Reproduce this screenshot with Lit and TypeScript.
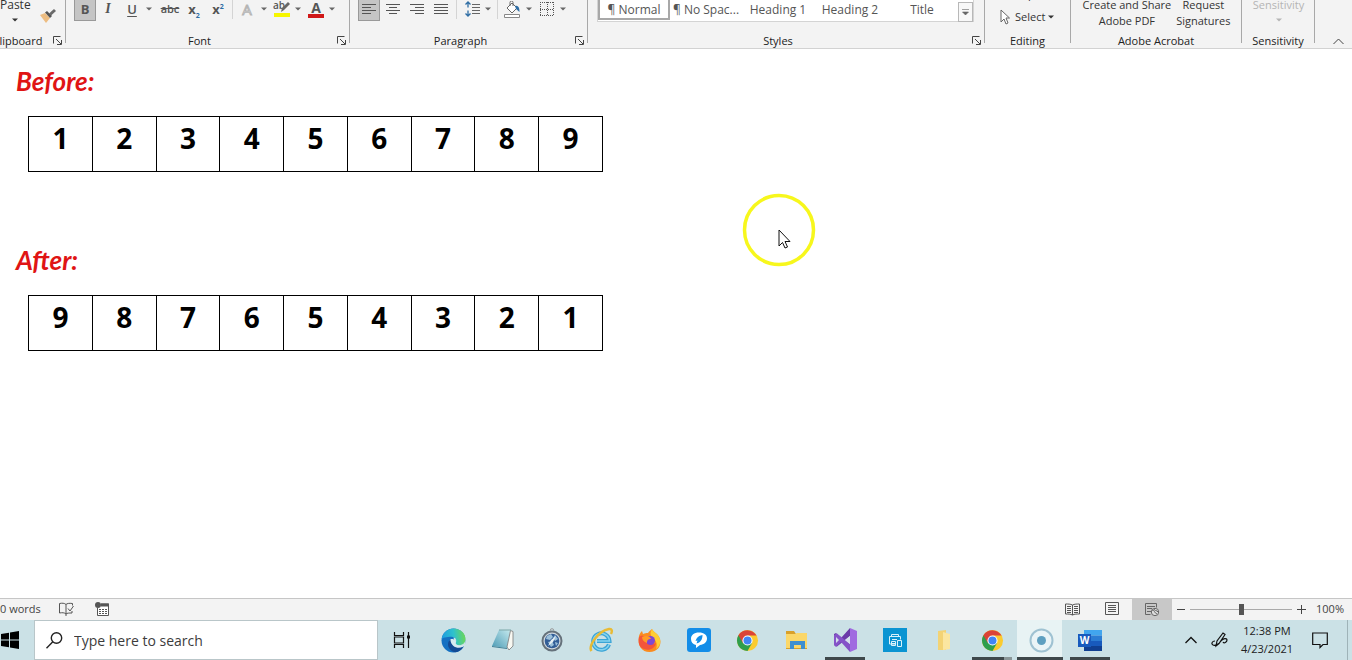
import { LitElement, html, css, svg, TemplateResult } from "lit";
import { customElement, property } from "lit/decorators.js";
import { classMap } from "lit/directives/class-map.js";

const reset = css`
  * { box-sizing: border-box; }
  button, input { font: inherit; color: inherit; margin: 0; padding: 0; border: 0; background: none; border-radius: 0; }
  button { display: flex; align-items: center; justify-content: center; white-space: nowrap; }
  svg { display: block; flex: none; }
`;

const caret = html`<svg width="6" height="4" viewBox="0 0 6 4"><path d="M0 .5h6L3 3.5z" fill="currentColor"/></svg>`;

const lines = (rows: number[][]) => html`<svg width="14" height="12" viewBox="0 0 14 12" stroke="#555" fill="none">
  ${rows.map(([a, b], i) => svg`<path d="M${a} ${i * 3 + 1.5}H${b}"/>`)}</svg>`;

@customElement("ribbon-group")
class RibbonGroup extends LitElement {
  @property() label = "";
  @property({ type: Boolean }) launcher = false;

  static styles = [reset, css`
    :host { display: flex; flex-direction: column; position: relative; height: 48px; overflow: hidden; }
    :host::after { content: ""; position: absolute; right: 0; top: 0; height: 43px; width: 1px; background: #a8a8a8; }
    .tools { flex: 1; min-height: 0; }
    .foot { display: flex; align-items: center; height: 16px; padding-right: 1px; color: #222; }
    .label { flex: 1; padding-top: 1px; white-space: nowrap; display: flex; justify-content: center; }
    .launch { width: 16px; height: 16px; }
  `];

  render() {
    return html`
      <div class="tools"><slot></slot></div>
      <div class="foot">
        <span class="label">${this.label}</span>
        ${this.launcher ? html`<button class="launch" aria-label="${this.label} settings">
          <svg width="9" height="9" viewBox="0 0 9 9" fill="none" stroke="#444"><path d="M.5 7.500V.5H7.500M3 3l5 5M8.500 4v4.500H4"/></svg>
        </button>` : null}
      </div>`;
  }
}

@customElement("word-ribbon")
class WordRibbon extends LitElement {
  static styles = [reset, css`
    :host { display: flex; background: #f3f3f3; border-bottom: 1px solid #d2d2d2; color: #333; font-size: 11px; overflow: hidden; }
    .clipboard { width: 80px; margin-left: -14px; }
    .font { width: 284px; }
    .paragraph { width: 238px; }
    .styles { flex: 1; min-width: 397px; }
    .editing { width: 86px; }
    .acrobat { width: 171px; }
    .sensitivity { width: 73px; }
    .end { width: 37px; display: flex; align-items: flex-end; justify-content: flex-end; padding: 0 8px 3px 0; }
    .row { display: flex; height: 20px; padding-left: 8px; align-items: center; color: #555; }
    .tool { width: 22px; height: 22px; margin-top: -2px; }
    .wide { width: 24px; }
    .on { background: #c5c5c5; border: 1px solid #999; height: 24px; }
    .caret { width: 10px; height: 20px; margin-top: -2px; color: #666; }
    .gap { margin-right: 4px; }
    .near { margin-right: 2px; }
    .aligns { display: flex; gap: 2px; align-items: center; }
    .sep { width: 1px; height: 20px; margin: -2px 4px 0 4px; background: #d4d4d4; }
    .tight { margin: -2px 2px 0 2px; }
    .b { font-weight: 700; font-size: 13px; }
    .i { font: italic 700 14px "Liberation Serif", serif; }
    .u { font-weight: 600; font-size: 13px; text-decoration: underline; text-underline-offset: 2px; }
    .s { font-size: 11px; font-weight: 600; text-decoration: line-through; }
    .x { font-weight: 700; font-size: 13px; }
    .x sub, .x sup { font-size: 7px; line-height: 0; color: #2e6da4; }
    .ghost { font-size: 15px; line-height: 18px; color: #f3f3f3; -webkit-text-stroke: 1px #b5b5b5; }
    .red { font-size: 14px; font-weight: 700; line-height: 14px; border-bottom: 4px solid #d01818; width: 16px; height: 17px; text-align: center; }
    .clip { display: flex; align-items: flex-start; justify-content: space-between; padding: 0 10px 0 14px; font-size: 12px; }
    .paste { display: flex; flex-direction: column; align-items: center; gap: 5px; margin-top: -3px; line-height: 16px; }
    .brush { margin-top: 8px; }
    .gallery { display: flex; height: 22px; margin: 0 11px 0 9px; background: #fff; border: 1px solid #d4d4d4; border-top: 0; color: #555; font-size: 12px; }
    .style { flex: 1; min-width: 0; height: 20px; padding-bottom: 1px; }
    .chosen { box-shadow: inset 2px 0 #a8a8a8, inset -2px 0 #a8a8a8, inset 0 -2px #a8a8a8; }
    .more { width: 15px; height: 20px; margin-top: 2px; border: 1px solid #b8b8b8; background: #f8f8f8; }
    .edits { display: flex; flex-direction: column; align-items: flex-start; gap: 4px; padding-left: 14px; margin-top: -16px; }
    .edit { gap: 5px; height: 20px; padding-left: 1px; color: #333; }
    .select { display: flex; align-items: center; gap: 3px; }
    .replace { padding-left: 16px; height: 19px; }
    .acro { display: flex; justify-content: center; gap: 5px; margin-top: -3px; }
    .two { line-height: 16px; text-align: center; display: block; }
    .sens { display: flex; flex-direction: column; gap: 5px; width: 100%; margin-top: -3px; line-height: 16px; color: #b5b5b5; }
  `];

  private drop(name: string, extra = "") {
    return html`<button class="caret ${extra}" aria-label="${name} options">${caret}</button>`;
  }

  render() {
    const aligns: [string, number[][]][] = [
      ["Align left", [[0, 14], [0, 9], [0, 14], [0, 9]]],
      ["Center", [[0, 14], [3, 11], [0, 14], [3, 11]]],
      ["Align right", [[0, 14], [5, 14], [0, 14], [5, 14]]],
      ["Justify", [[0, 14], [0, 14], [0, 14], [0, 14]]],
    ];
    const styles = ["¶ Normal", "¶ No Spac...", "Heading 1", "Heading 2", "Title"];
    return html`
      <ribbon-group class="clipboard" label="Clipboard" launcher>
        <div class="clip">
          <button class="paste"><span>Paste</span>${caret}</button>
          <button class="brush" aria-label="Format painter">
            <svg width="16" height="15" viewBox="0 0 16 15"><path d="M0 7l5-2 5 5-4 5z" fill="#edbd82"/><path d="M5 4.500l2-1.500 5 5-2 2z" fill="#555"/><path d="M9 5.500L14 1l2 2-5 4.500z" fill="#6a6a6a"/></svg>
          </button>
        </div>
      </ribbon-group>
      <ribbon-group class="font" label="Font" launcher>
        <div class="row">
          <button class="tool on b">B</button>
          <button class="tool wide i">I</button>
          <button class="tool wide u">U</button>
          ${this.drop("Underline", "gap")}
          <button class="tool wide s">abc</button>
          <button class="tool wide x"><span>x<sub>2</sub></span></button>
          <button class="tool wide x"><span>x<sup>2</sup></span></button>
          <span class="sep tight"></span>
          <button class="tool wide ghost">A</button>
          ${this.drop("Text effects", "near")}
          <button class="tool" aria-label="Highlight color">
            <svg width="18" height="18" viewBox="0 0 18 18"><text x="0" y="9" font-size="10" font-weight="600" fill="#555">ab</text><path d="M1 13h16v4H1z" fill="#f6f600"/><path d="M8 12l1-4 6-6 2 2-6 6z" fill="#666"/></svg>
          </button>
          ${this.drop("Highlight", "near")}
          <button class="tool"><span class="red">A</span></button>
          ${this.drop("Font color")}
        </div>
      </ribbon-group>
      <ribbon-group class="paragraph" label="Paragraph" launcher>
        <div class="row">
          <div class="aligns">
            ${aligns.map(([name, rows], i) => html`<button class=${classMap({ tool: true, on: i === 0 })} aria-label=${name}>${lines(rows)}</button>`)}
          </div>
          <span class="sep"></span>
          <button class="tool" aria-label="Line spacing">
            <svg width="15" height="16" viewBox="0 0 15 16" fill="none"><path d="M3 1v5.500M3 9.500V15M.5 3.500L3 1l2.500 2.500M.5 12.500L3 15l2.500-2.500" stroke="#2e6da4" stroke-width="1.300"/><path d="M7 3.500h8M7 6.500h8M7 9.500h8M7 12.500h8" stroke="#666"/></svg>
          </button>
          ${this.drop("Line spacing", "near")}
          <span class="sep tight"></span>
          <button class="tool wide" aria-label="Shading">
            <svg width="17" height="17" viewBox="0 0 17 17" fill="none"><path d="M3 7l5-5 5 5-5 5zM6 5V1.500a1.500 1.500 0 0 1 3 0V5" stroke="#666" fill="#fff"/><path d="M11 5c3-1 4.500 1 4.500 6L12 8z" fill="#2e6da4"/><path d="M.5 13.500h15v3H.5z" stroke="#888" fill="#fff"/></svg>
          </button>
          ${this.drop("Shading", "near")}
          <button class="tool" aria-label="Borders">
            <svg width="14" height="14" viewBox="0 0 14 14" fill="none" stroke="#555" stroke-dasharray="1 1"><path d="M.5 0v14M13.500 0v14M0 .5h14M7.500 0v14M0 7.500h14"/><path d="M0 13.500h14"/></svg>
          </button>
          ${this.drop("Borders")}
        </div>
      </ribbon-group>
      <ribbon-group class="styles" label="Styles" launcher>
        <div class="gallery">
          ${styles.map((s, i) => html`<button class=${classMap({ style: true, chosen: i === 0 })}>${s}</button>`)}
          <button class="more" aria-label="More styles"><svg width="7" height="7" viewBox="0 0 7 7"><path d="M0 .5h7M.5 3h6l-3 3z" fill="#666" stroke="#666" stroke-width=".6"/></svg></button>
        </div>
      </ribbon-group>
      <ribbon-group class="editing" label="Editing">
        <div class="edits">
          <button class="edit replace">Replace</button>
          <button class="edit"><svg width="10" height="16" viewBox="0 0 10 16"><path d="M1 1v12l3-3 2 5 2-1-2-5h3.500z" fill="#fff" stroke="#666"/></svg><span class="select">Select ${caret}</span></button>
        </div>
      </ribbon-group>
      <ribbon-group class="acrobat" label="Adobe Acrobat">
        <div class="acro">
          <button class="two">Create and Share<br>Adobe PDF</button>
          <button class="two">Request<br>Signatures</button>
        </div>
      </ribbon-group>
      <ribbon-group class="sensitivity" label="Sensitivity">
        <button class="sens" disabled><span>Sensitivity</span>${caret}</button>
      </ribbon-group>
      <div class="end"><button aria-label="Collapse ribbon"><svg width="11" height="7" viewBox="0 0 11 7" fill="none" stroke="#444"><path d="M.5 6l5-5 5 5"/></svg></button></div>`;
  }
}

@customElement("word-document")
class WordDocument extends LitElement {
  static styles = [reset, css`
    :host { display: block; background: #fff; padding: 17px 16px; overflow: hidden; }
    .block { margin-bottom: 73px; }
    h2 { margin: 0 0 20px; font-family: Lato, sans-serif; font-size: 26px; line-height: 30px; font-weight: 700; font-style: italic; color: #e01414; }
    table { border-collapse: collapse; table-layout: fixed; width: 575px; max-width: 100%; margin-left: 12px; }
    td { border: 1px solid #000; height: 55px; padding: 3px 0 0; vertical-align: top; text-align: center; font-size: 28px; line-height: 36px; font-weight: 700; color: #000; }
  `];

  render() {
    const digits = [1, 2, 3, 4, 5, 6, 7, 8, 9];
    const block = (title: string, values: number[]) => html`<section class="block">
      <h2>${title}</h2>
      <table aria-label=${title}><tbody><tr>${values.map((v) => html`<td>${v}</td>`)}</tr></tbody></table>
    </section>`;
    return html`${block("Before:", digits)}${block("After:", [...digits].reverse())}`;
  }
}

@customElement("word-status")
class WordStatus extends LitElement {
  static styles = [reset, css`
    :host { display: flex; align-items: flex-start; height: 22px; background: #f3f3f3; border-top: 1px solid #c6c6c6; color: #444; padding-right: 8px; font-size: 11px; line-height: 20px; }
    .words { margin-right: 18px; }
    .icon { width: 16px; height: 20px; margin-right: 19px; }
    .space { flex: 1; }
    .view { width: 40px; height: 20px; }
    .active { background: #c8c8c8; height: 21px; }
    .step { width: 18px; height: 20px; }
    .zoom { -webkit-appearance: none; appearance: none; width: 102px; height: 20px; background: linear-gradient(#aaa, #aaa) center / 100% 1px no-repeat; }
    .zoom::-webkit-slider-thumb { -webkit-appearance: none; width: 5px; height: 11px; background: #555; }
    .pct { margin-left: 6px; width: 28px; justify-content: flex-end; }
  `];

  render() {
    return html`
      <span class="words">0 words</span>
      <button class="icon" aria-label="Proofing"><svg width="15" height="14" viewBox="0 0 15 14" fill="none" stroke="#555"><path d="M7 2.500C5.500 1 3 1 .5 1.500v9.500c2.500-.5 5-.5 6.500 1V2.500C8 1.500 10 1 13.500 1.500v2M7 12c1-1 3-1 6-1V9M9 6.500l2 2.500 3.500-5M7 12v2"/></svg></button>
      <button class="icon" aria-label="Macros"><svg width="14" height="14" viewBox="0 0 14 14"><path d="M2.500 6v7.500h11V2H6" fill="#fff" stroke="#555"/><path d="M6 1.500h8V4.500H6z" fill="#555"/><circle cx="3" cy="3" r="3" fill="#555"/><path d="M4 7.500h8M4 9.500h8M4 11.500h8" stroke="#555" stroke-dasharray="2 1"/></svg></button>
      <span class="space"></span>
      <button class="view" aria-label="Read mode"><svg width="15" height="13" viewBox="0 0 15 13" fill="none" stroke="#555"><path d="M7.500 2C5.500 1 3 1 .5 1v10c2.500 0 5 0 7 1 2-1 4.500-1 7-1V1c-2.500 0-5 0-7 1zM7.500 2v10M2 3.500h4M2 5.500h4M2 7.500h4M2 9.500h4M9 3.500h4M9 5.500h4M9 7.500h4M9 9.500h4"/></svg></button>
      <button class="view" aria-label="Print layout"><svg width="14" height="14" viewBox="0 0 14 14" fill="none" stroke="#555"><path d="M.5.500h13v12H.5zM3 3.500h8M3 5.500h8M3 7.500h8M3 9.500h8"/></svg></button>
      <button class="view active" aria-label="Web layout"><svg width="15" height="14" viewBox="0 0 15 14" fill="none" stroke="#666"><path d="M5.500 11.500h-5V.5h11v4M2 3.500h8M2 5.500h5M2 8.500h4"/><circle cx="10" cy="9" r="3.700" fill="#ddd"/><path d="M7 7c3 0 2 3 5 4M9 6c0 2 3 1 4 3"/></svg></button>
      <button class="step" aria-label="Zoom out"><svg width="8" height="9" viewBox="0 0 8 9" stroke="#444"><path d="M0 4.500h8"/></svg></button>
      <input class="zoom" type="range" min="0" max="100" .value=${"50"} aria-label="Zoom">
      <button class="step" aria-label="Zoom in"><svg width="9" height="9" viewBox="0 0 9 9" stroke="#444"><path d="M0 4.500h9M4.500 0v9"/></svg></button>
      <button class="pct">100%</button>`;
  }
}

const chrome = html`<svg width="23" height="23" viewBox="0 0 24 24">
  <circle cx="12" cy="12" r="11" fill="#fbcb2f"/>
  <path d="M12 12L2.500 6.500A11 11 0 0 0 12 23l4.800-8.500z" fill="#2f9e4d"/>
  <path d="M2.500 6.500A11 11 0 0 1 21.500 6.800H12L7.200 14.500z" fill="#db4437"/>
  <circle cx="12" cy="12" r="5.300" fill="#fff"/><circle cx="12" cy="12" r="4.200" fill="#4285f4"/></svg>`;

interface App { name: string; state?: string; icon: TemplateResult; }

const apps: App[] = [
  { name: "Edge", icon: html`<svg width="25" height="25" viewBox="0 0 24 24">
    <defs><linearGradient id="eg" x1="0" y1=".3" x2="1" y2=".2"><stop offset="0" stop-color="#1d9de0"/><stop offset=".5" stop-color="#2fc2cc"/><stop offset="1" stop-color="#6fd94e"/></linearGradient></defs>
    <circle cx="12" cy="12" r="11.500" fill="#1570c2"/>
    <path d="M12 9h11.500V17L14 19z" fill="#cbe1e6"/>
    <path d="M.6 11C1.500 4.500 6.500.5 12 .5c7 0 11.500 5 11.500 10 0 4-3 6-6.300 6-2.500 0-3.700-1-3.200-2 1.400-1.800.8-6-4-6C5.500 8.500 1 9.500.6 11z" fill="url(#eg)"/>
    <path d="M9.500 10.500c-3.500 3-1 9 4.500 9.500 3 .2 6.800-1.200 9-3.500-4 1-9.300.5-9-2.500.8-1-.7-4-4.500-3.500z" fill="#d8eaf0"/>
    <path d="M9 11c-4.500 3.500-2 11 4.500 12.300 3.500-.3 6.300-2.300 7.800-5.300-5 2.500-11.800.2-12.300-7z" fill="#144a94"/></svg>` },
  { name: "Notepad", icon: html`<svg width="24" height="24" viewBox="0 0 24 24"><defs><linearGradient id="np" x1="1" y1="0" x2="0" y2="1"><stop offset="0" stop-color="#c4e9ee"/><stop offset="1" stop-color="#4b9ab4"/></linearGradient></defs><path d="M8 2l11 .5L16 20 1 18z" fill="url(#np)"/><path d="M19.500 2.500l2.500 1V18l-4 4-2-3z" fill="#f8f8f2" stroke="#777" stroke-width=".8"/><path d="M1 18l15 2v1L1 19z" fill="#3f7f95"/><path d="M8 2h12" stroke="#78a6a8"/></svg>` },
  { name: "Safari", icon: html`<svg width="24" height="25" viewBox="0 0 24 25"><circle cx="12" cy="2.500" r="1.800" fill="none" stroke="#999"/><circle cx="12" cy="13" r="9.500" fill="#d0d8de" stroke="#65717b" stroke-width="2"/><circle cx="12" cy="13" r="7.300" fill="#315d96"/><path d="M7 8l4-2 2 3-3 3-4-1zM15 7l3 4-3 2-2-3zM8 14l4-1 2 4-3 2zM15 14l3 1-2 3z" fill="#9cc0da"/><path d="M16 8l-3 6-5 4 3-6z" fill="#e6f0f5"/></svg>` },
  { name: "Internet Explorer", icon: html`<svg width="26" height="26" viewBox="0 0 26 26" fill="none"><path d="M21 17.500A8.200 8.200 0 1 1 21.500 14H9" stroke="#3ba4d6" stroke-width="4"/><path d="M21 17.500A8.200 8.200 0 1 1 21.500 14H9" stroke="#86d3ef" stroke-width="1.500"/><path d="M3.500 24C0 19 10 4 21 2c3-.5 3.500 2 2 5" stroke="#e9bb35" stroke-width="2.500"/></svg>` },
  { name: "Firefox", icon: html`<svg width="25" height="25" viewBox="0 0 25 25"><path d="M2 8C3 5 4 4 5 3l1 3c2-1 3-1 5-1 1-2 3-3 4-4 1 3 6 4 8 10 2 7-3 13-10.500 13S0 18 2 8z" fill="#fa8b1f"/><path d="M15 1c1 3 6 4 8 10 1 5-1 8-4 10 2-5 0-9-4-12-2-2-2-5 0-8z" fill="#ffce34"/><path d="M2 9c2-2 4-2 6 0 4-1 6 0 7 3-2-1-3 0-4 2 2 2 5 3 8 1-1 6-7 8-12 6S1 15 2 9z" fill="#f4553a"/><circle cx="13.500" cy="12.500" r="4.500" fill="#8048d3"/><path d="M5 9c4-2 8-1 9 2-3 0-4 1-4 4-3-1-5-3-5-6z" fill="#ff9b25"/></svg>` },
  { name: "Messenger", icon: html`<svg width="24" height="24" viewBox="0 0 24 24"><rect width="24" height="24" rx="3" fill="#138de8"/><path d="M12 4.500c5 0 8 2.500 8 6s-3 6-7 6.500L9 20v-3c-3-.5-5-3-5-6 0-4 3-6.500 8-6.500z" fill="#fff"/><path d="M15.500 7c-4 .5-6 3-7 6l2-.5-1 3c4-1 6-4 6-8.500z" fill="#138de8"/></svg>` },
  { name: "Chrome", icon: chrome },
  { name: "File Explorer", icon: html`<svg width="24" height="22" viewBox="0 0 24 22"><path d="M1 2h8l2 3h11v15H1z" fill="#d9a02a"/><path d="M1 5h9l2-1h10v15H1z" fill="#fbd769"/><path d="M5 12h15v8h-4v-4H9v4H5z" fill="#3f8fd0"/></svg>` },
  { name: "Visual Studio", state: "open", icon: html`<svg width="25" height="24" viewBox="0 0 25 24"><path d="M17 0l7 3v18l-7 3z" fill="#a06be0"/><path d="M1 6l2-1 5 5 9-10v8L4 18.500 1 17z" fill="#6b3aa8"/><path d="M1 17l2 2 5-5 9 10v-8L4 5.500 1 7z" fill="#8553c8"/><path d="M3 9v6l3-3zM17 8v8l-5-4z" fill="#d5dfec"/></svg>` },
  { name: "Scanner", icon: html`<svg width="24" height="24" viewBox="0 0 24 24" fill="none" stroke="#d9f1fa"><path d="M0 0h24v24H0z" fill="#0a94d2" stroke="none"/><path d="M8.500 8V6.500h7V8M12 16H6.500V8.500h11v3M9 11.500h5M8.500 17.500h4v-4h-4zM14.500 12.500h4v6h-4zM8.500 15.500h4"/></svg>` },
  { name: "Folder", icon: html`<svg width="16" height="22" viewBox="0 0 16 22"><path d="M2 2l8-1v20H2z" fill="#f3d374"/><path d="M7 3l7 2v15l-7 1z" fill="#fbe6a0"/></svg>` },
  { name: "Chrome window", state: "open many", icon: chrome },
  { name: "Recorder", state: "open focus", icon: html`<svg width="25" height="25" viewBox="0 0 25 25"><circle cx="12.500" cy="12.500" r="11" fill="#eaf4f7" stroke="#9fc2d2" stroke-width="2"/><circle cx="12.500" cy="12.500" r="4.500" fill="#5e9fc0"/></svg>` },
  { name: "Word", state: "open", icon: html`<svg width="25" height="23" viewBox="0 0 25 23"><path d="M6 1h18v5.500H6z" fill="#41a5ee"/><path d="M6 6.500h18V12H6z" fill="#2b7cd3"/><path d="M6 12h18v5H6z" fill="#185abd"/><path d="M6 17h18v5H6z" fill="#103f91"/><path d="M0 5h13v13H0z" fill="#185abd"/><text x="6.500" y="15" font-size="10" font-weight="700" text-anchor="middle" fill="#fff">W</text></svg>` },
];

@customElement("task-bar")
class TaskBar extends LitElement {
  static styles = [reset, css`
    :host { display: flex; height: 40px; background: #cbe1e6; color: #222; padding-right: 4px; }
    .start { width: 34px; padding-right: 15px; }
    .search { display: flex; align-items: center; width: 344px; background: #fff; border: 1px solid #b9c6c9; padding-left: 11px; gap: 11px; }
    .field { flex: 1; min-width: 0; height: 36px; outline: 0; font-size: 14px; }
    .field::placeholder { color: #3c3c3c; opacity: 1; }
    .view { width: 51px; padding-right: 3px; }
    .apps { display: flex; }
    .app { position: relative; width: 49px; height: 40px; }
    .open::after { content: ""; position: absolute; left: 4px; right: 5px; bottom: 0; height: 3px; background: #3f484b; }
    .many::after { background: linear-gradient(90deg, #3f484b 32px, #8a9698 32px); }
    .focus { background: linear-gradient(90deg, #e8f3f4 45px, transparent 45px); }
    .focus::after { left: 0; right: 3px; }
    .space { flex: 1; }
    .tray { width: 28px; }
    .clock { width: 68px; display: block; font-size: 11px; line-height: 18px; text-align: center; }
    .note { width: 40px; margin-right: 6px; padding-right: 2px; }
    .edge { width: 1px; background: #9fb3b8; }
  `];

  render() {
    return html`
      <button class="start" aria-label="Start"><svg width="18" height="18" viewBox="0 0 18 18"><path d="M0 3l8-1.200V8.500H0zM9 1.600L18 0v8.500H9zM0 9.500h8v6.700L0 15zM9 9.500h9V18l-9-1.600z" fill="#000"/></svg></button>
      <label class="search">
        <svg width="17" height="17" viewBox="0 0 17 17" fill="none" stroke="#222" stroke-width="1.400"><circle cx="10.500" cy="6" r="5.200"/><path d="M6.800 9.800L.5 16.200"/></svg>
        <input class="field" type="text" placeholder="Type here to search" aria-label="Search">
      </label>
      <button class="view" aria-label="Task view"><svg width="18" height="16" viewBox="0 0 18 16" fill="none" stroke="#111" stroke-width="1.200"><path d="M1.500 0v3.500h9V0M1.500 16v-3.500h9V16M1.500 5v6h9V5zM15.500 0v16"/><path d="M14 3.500h3v3h-3z" fill="#111" stroke="none"/></svg></button>
      <div class="apps">${apps.map((a) => html`<button class="app ${a.state ?? ""}" aria-label=${a.name}>${a.icon}</button>`)}</div>
      <span class="space"></span>
      <button class="tray" aria-label="Hidden icons"><svg width="12" height="8" viewBox="0 0 12 8" fill="none" stroke="#111" stroke-width="1.300"><path d="M.5 7L6 1.500 11.500 7"/></svg></button>
      <button class="tray" aria-label="Ink workspace"><svg width="17" height="17" viewBox="0 0 17 17" fill="none" stroke="#111" stroke-width="1.200"><path d="M5 14L6 9l6-8 2 1.500-6 9zM4 9C1 9 0 12 2 13s6-1 8-4 6-3 6-1-3 4-4 2"/></svg></button>
      <button class="clock">12:38 PM<br>4/23/2021</button>
      <button class="note" aria-label="Notifications"><svg width="16" height="17" viewBox="0 0 16 17" fill="none" stroke="#111" stroke-width="1.200"><path d="M.7 1h14.600v11.500H11L8 15.500v-3H.7z"/></svg></button>
      <span class="edge"></span>`;
  }
}

@customElement("app-root")
class AppRoot extends LitElement {
  static styles = [reset, css`
    :host { display: flex; flex-direction: column; position: relative; height: 100vh; overflow: hidden; background: #fff; font: 12px/16px "Open Sans", "Noto Sans", sans-serif; }
    .page { flex: 1; min-height: 0; }
    .pointer { position: absolute; left: 742px; top: 193px; pointer-events: none; }
  `];

  render() {
    return html`
      <word-ribbon></word-ribbon>
      <word-document class="page"></word-document>
      <word-status></word-status>
      <task-bar></task-bar>
      <svg class="pointer" width="74" height="74" viewBox="0 0 74 74"><circle cx="37" cy="37" r="34.500" fill="none" stroke="#f7f71c" stroke-width="3.500"/><path d="M37 37v16l3.500-3.500L43 55l2.500-1-2.500-5.500h5z" fill="#fff" stroke="#111"/></svg>`;
  }
}
